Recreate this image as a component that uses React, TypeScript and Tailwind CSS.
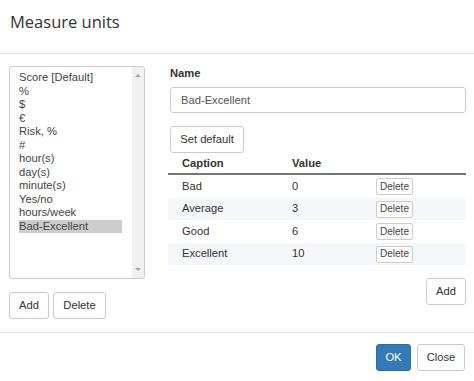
const units = [
  "Score [Default]",
  "%",
  "$",
  "€",
  "Risk, %",
  "#",
  "hour(s)",
  "day(s)",
  "minute(s)",
  "Yes/no",
  "hours/week",
  "Bad-Excellent",
];

const values = [
  { caption: "Bad", value: "0" },
  { caption: "Average", value: "3" },
  { caption: "Good", value: "6" },
  { caption: "Excellent", value: "10" },
];

function Btn({ children, className = "" }: { children: React.ReactNode; className?: string }) {
  return (
    <button
      className={`h-[27px] border border-[#ccc] bg-white rounded-[3px] text-[#333] text-[11.2px] leading-none ${className}`}
    >
      {children}
    </button>
  );
}

export default function App() {
  const selected = "Bad-Excellent";

  return (
    <div className="w-[474px] h-[381px] bg-white text-[#333] text-[11.2px] font-['Liberation_Sans',Arial,sans-serif] overflow-hidden">
      {/* Header */}
      <div className="h-[54px] border-b border-[#e5e5e5] px-[10px] pt-[11px]">
        <h1 className="font-['Open_Sans',sans-serif] text-[16.5px] leading-[22px] text-[#333]">Measure units</h1>
      </div>

      {/* Body */}
      <div className="h-[278px] flex pl-[9px] pt-[12px]">
        {/* Units list */}
        <div className="w-[136px] flex flex-col">
          <div className="h-[213px] border border-[#ccc] rounded-[3px] flex overflow-hidden">
            <div className="flex-1 pl-[9px] pr-[10px] pt-[4px] text-[#444]">
              {units.map((u) => (
                <div
                  key={u}
                  className={`h-[13.5px] leading-[13.5px] whitespace-nowrap ${u === selected ? "bg-[#cdcdcd]" : ""}`}
                >
                  {u}
                </div>
              ))}
            </div>
            <div className="w-[12px] bg-[#f1f1f1] flex flex-col items-center justify-between py-[7px]">
              <div className="w-0 h-0 border-l-[3px] border-r-[3px] border-b-[3px] border-l-transparent border-r-transparent border-b-[#a3a3a3]" />
              <div className="w-0 h-0 border-l-[3px] border-r-[3px] border-t-[3px] border-l-transparent border-r-transparent border-t-[#a3a3a3]" />
            </div>
          </div>
          <div className="flex gap-[4px] mt-[13px]">
            <Btn className="w-[40px]">Add</Btn>
            <Btn className="w-[53px]">Delete</Btn>
          </div>
        </div>

        {/* Editor */}
        <div className="w-[296px] ml-[25px] flex flex-col">
          <label className="font-bold leading-[13px] mt-[1px]">Name</label>
          <input
            readOnly
            value="Bad-Excellent"
            className="mt-[7px] h-[26px] border border-[#ccc] rounded-[3px] px-[10px] text-[11.2px] text-[#555] outline-none"
          />
          <div className="mt-[13px]">
            <Btn className="w-[74px]">Set default</Btn>
          </div>
          <div className="-ml-[2px]">
            <div className="grid grid-cols-[112px_84px_1fr] h-[22px] items-center border-b-2 border-[#777] font-bold">
              <div className="pl-[14px]">Caption</div>
              <div className="pl-[12px]">Value</div>
              <div />
            </div>
            {values.map((r, i) => (
              <div
                key={r.caption}
                className={`grid grid-cols-[112px_84px_1fr] h-[22.5px] items-center ${i % 2 === 1 ? "bg-[#f5f7fa]" : ""}`}
              >
                <div className="pl-[14px]">{r.caption}</div>
                <div className="pl-[12px]">{r.value}</div>
                <div className="pl-[12px]">
                  <button className="w-[37px] h-[17px] border border-[#ccc] rounded-[2px] bg-white text-[10px] leading-none text-[#444]">
                    Delete
                  </button>
                </div>
              </div>
            ))}
          </div>
          <div className="flex justify-end mt-[13px]">
            <Btn className="w-[40px]">Add</Btn>
          </div>
        </div>
      </div>

      {/* Footer */}
      <div className="border-t border-[#e5e5e5] flex justify-end gap-[6px] pr-[9px] pt-[11px]">
        <button className="w-[35px] h-[27px] rounded-[3px] bg-[#337ab7] border border-[#2e6da4] text-white text-[11.2px] leading-none">
          OK
        </button>
        <Btn className="w-[48px]">Close</Btn>
      </div>
    </div>
  );
}
